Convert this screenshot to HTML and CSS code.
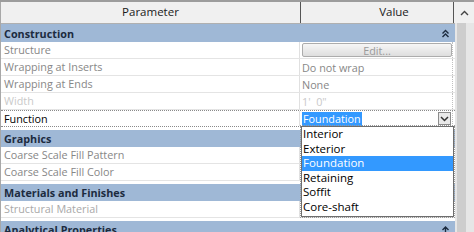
FILE: index.html
```html
<!DOCTYPE html>
<html lang="en">
<head>
  <meta charset="UTF-8">
  <title>Properties</title>
  <link rel="stylesheet" href="styles.css">
</head>
<body>
  <div class="panel">
    <div class="grid">
      <div class="head">
        <div class="hcell hparam">Parameter</div>
        <div class="hcell hvalue">Value</div>
      </div>

      <div class="group first">
        <span>Construction</span>
        <svg class="caret" width="9" height="9" viewBox="0 0 9 9"><path d="M1.5 4.5 L4.5 1.5 L7.5 4.5 M1.5 8 L4.5 5 L7.5 8" fill="none" stroke="#1c2b3f" stroke-width="1.4"/></svg>
      </div>
      <div class="row">
        <div class="name ro">Structure</div>
        <div class="val"><div class="edit">Edit...</div></div>
      </div>
      <div class="row">
        <div class="name ro">Wrapping at Inserts</div>
        <div class="val ro">Do not wrap</div>
      </div>
      <div class="row">
        <div class="name ro">Wrapping at Ends</div>
        <div class="val ro">None</div>
      </div>
      <div class="row">
        <div class="name off">Width</div>
        <div class="val off">1'&nbsp; 0"</div>
      </div>
      <div class="row focus">
        <div class="name">Function</div>
        <div class="val combo">
          <span class="sel">Foundation</span>
          <span class="drop"><svg width="9" height="6" viewBox="0 0 9 6"><path d="M1 1 L4.5 4.5 L8 1" fill="none" stroke="#333" stroke-width="1.5"/></svg></span>
        </div>
      </div>

      <div class="group">
        <span>Graphics</span>
      </div>
      <div class="row">
        <div class="name ro">Coarse Scale Fill Pattern</div>
        <div class="val"></div>
      </div>
      <div class="row">
        <div class="name ro">Coarse Scale Fill Color</div>
        <div class="val"></div>
      </div>

      <div class="group">
        <span>Materials and Finishes</span>
      </div>
      <div class="row">
        <div class="name faint">Structural Material</div>
        <div class="val"></div>
      </div>

      <div class="group">
        <span>Analytical Properties</span>
        <svg class="caret" width="9" height="9" viewBox="0 0 9 9"><path d="M1.5 5 L4.5 2 L7.5 5 M4.5 2 L4.5 8" fill="none" stroke="#1c2b3f" stroke-width="1.4"/></svg>
      </div>

      <ul class="list">
        <li>Interior</li>
        <li>Exterior</li>
        <li class="hi">Foundation</li>
        <li>Retaining</li>
        <li>Soffit</li>
        <li>Core-shaft</li>
      </ul>
    </div>

    <div class="scroll">
      <div class="sbtn">
        <svg width="9" height="6" viewBox="0 0 9 6"><path d="M1 5 L4.5 1.5 L8 5" fill="none" stroke="#444" stroke-width="1.4"/></svg>
      </div>
      <div class="track"><div class="thumb"></div></div>
    </div>
  </div>
</body>
</html>
```

FILE: styles.css
```css
body {
  margin: 0;
  background: #ffffff;
  font-family: "Open Sans", "Noto Sans", sans-serif;
  font-size: 10.8px;
  color: #000;
}

.panel {
  display: flex;
  width: 474px;
  height: 232px;
  overflow: hidden;
  border-top: 2px solid #9c9c9c;
  box-sizing: border-box;
}

.grid {
  position: relative;
  width: 455px;
  border-left: 1px solid #a8a8a8;
  box-sizing: border-box;
}

.head {
  display: flex;
  height: 21px;
  background: #f0f0f0;
  border-bottom: 1px solid #b0b0b0;
}

.hcell {
  line-height: 20px;
  font-size: 11.5px;
  color: #1a1a1a;
}

.hparam {
  width: 299px;
  text-align: center;
  border-right: 1px solid #555;
}

.hvalue {
  width: 153px;
  text-align: center;
  padding-left: 34px;
  box-sizing: border-box;
  border-right: 1px solid #555;
}

.group {
  display: flex;
  align-items: center;
  justify-content: space-between;
  height: 17px;
  margin-top: 3px;
  padding: 0 5px 0 3px;
  background: #9fb8d6;
  font-weight: bold;
  color: #1c2b3f;
}

.group.first {
  margin-top: 0;
  height: 18px;
}

.row {
  display: flex;
  height: 17px;
  border-bottom: 1px solid #e4e4e4;
  box-sizing: border-box;
}

.row.focus {
  border-top: 1px dotted #8a8a8a;
  border-bottom: 1px dotted #8a8a8a;
}

.name {
  width: 299px;
  padding-left: 3px;
  line-height: 16px;
  border-right: 1px solid #e0e0e0;
  box-sizing: border-box;
  white-space: nowrap;
}

.val {
  display: flex;
  align-items: center;
  width: 153px;
  padding-left: 2px;
  box-sizing: border-box;
  border-right: 1px dotted #c0c0c0;
}

.ro {
  color: #878787;
}

.off {
  color: #c9c9c9;
}

.faint {
  color: #a9a9a9;
}

.edit {
  width: 150px;
  height: 14px;
  line-height: 13px;
  text-align: center;
  color: #9a9a9a;
  background: linear-gradient(#f6f6f6, #dedede);
  border: 1px solid #acacac;
  border-radius: 2px;
  box-sizing: border-box;
}

.combo {
  justify-content: space-between;
  padding-right: 1px;
}

.sel {
  background: #3399ff;
  color: #fff;
  padding: 0 1px;
  line-height: 14px;
}

.drop {
  display: flex;
  align-items: center;
  justify-content: center;
  width: 13px;
  height: 13px;
  background: #e9e9e9;
  border: 1px solid #8c8c8c;
  box-sizing: border-box;
}

.list {
  position: absolute;
  left: 300px;
  top: 124px;
  width: 153px;
  margin: 0;
  padding: 0 0 2px 0;
  list-style: none;
  background: #fff;
  border: 1px solid #6e6e6e;
  outline: 1px dotted #9a9a9a;
  box-sizing: border-box;
}

.list li {
  height: 14.5px;
  line-height: 14.5px;
  padding-left: 1px;
  font-size: 11.5px;
}

.list li.hi {
  background: #3399ff;
  color: #fff;
}

.scroll {
  width: 19px;
  display: flex;
  flex-direction: column;
  background: #e6e6e6;
}

.sbtn {
  height: 21px;
  display: flex;
  align-items: center;
  justify-content: center;
  background: #f0f0f0;
}

.track {
  flex: 1;
  padding-left: 2px;
}

.thumb {
  width: 9px;
  height: 100%;
  background: #cdcdcd;
}
```
